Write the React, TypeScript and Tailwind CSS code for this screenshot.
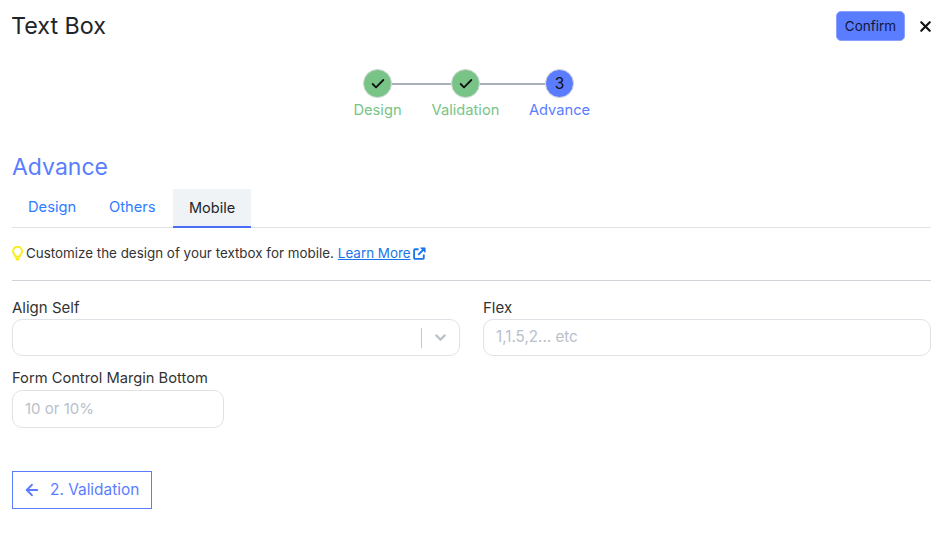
import { ArrowLeft, Check, ChevronDown, X } from 'lucide-react';

const font = "font-['Inter','Noto_Sans',sans-serif]";

function Step({ label, state, n }: { label: string; state: 'done' | 'current'; n?: number }) {
  const done = state === 'done';
  return (
    <div className="flex flex-col items-center w-[29px] relative z-10">
      <div className={`w-[29px] h-[29px] shrink-0 rounded-full border border-[#d5d8dc] flex items-center justify-center ${done ? 'bg-[#78c486]' : 'bg-[#5a7dff]'}`}>
        {done ? <Check className="w-[16px] h-[16px] text-[#111]" strokeWidth={2.7} /> : <span className="text-[15.5px] leading-none text-[#111]">{n}</span>}
      </div>
      <span className={`mt-[2px] whitespace-nowrap text-[14.7px] leading-[20px] ${done ? 'text-[#78c486]' : 'text-[#5a7dff]'}`}>{label}</span>
    </div>
  );
}

function Bulb() {
  return (
    <svg viewBox="0 0 11 15" className="w-[11px] h-[15px] mr-[3px] shrink-0">
      <path d="M3.4 10.6C3.2 8.8 1 7.8 1 5.3a4.5 4.5 0 0 1 9 0c0 2.5-2.2 3.5-2.4 5.3z" fill="none" stroke="#f9ee1a" strokeWidth="2" />
      <path d="M3.5 11.6h4v1.4c0 1-.8 1.7-2 1.7s-2-.7-2-1.7z" fill="#f9ee1a" />
    </svg>
  );
}

function ExternalLink() {
  return (
    <svg viewBox="0 0 14 14" className="ml-[2px] w-[13px] h-[13px] shrink-0" fill="none" stroke="#1c74e9" strokeWidth="2">
      <path d="M6 2.4H2.2a1 1 0 0 0-1 1v8.4a1 1 0 0 0 1 1h8.4a1 1 0 0 0 1-1V8" />
      <path d="M5.6 8.4 12.4 1.6" />
      <path d="M8 1h5v5" fill="#1c74e9" strokeWidth="1" />
    </svg>
  );
}

export default function App() {
  return (
    <div className={`w-[942px] h-[555px] bg-white overflow-hidden px-[11px] ${font}`}>
      <div className="flex items-center justify-between h-[52px]">
        <h1 className="text-[23.3px] leading-[30px] text-[#212529]">Text Box</h1>
        <div className="flex items-center mr-[-3px]">
          <button className="w-[69px] h-[30px] rounded-[5px] bg-[#5a7dff] border border-[#8aa2ff] text-[13.5px] text-[#10163a]">Confirm</button>
          <X className="ml-[12px] w-[17px] h-[17px] text-[#111]" strokeWidth={3} />
        </div>
      </div>

      <div className="flex justify-center mt-[17px] h-[50px] pr-[5px]">
        <div className="relative flex items-start">
          <Step label="Design" state="done" />
          <div className="w-[59px] h-[2px] mt-[14px] bg-[#a9afb9]" />
          <Step label="Validation" state="done" />
          <div className="w-[65px] h-[2px] mt-[14px] bg-[#a9afb9]" />
          <Step label="Advance" state="current" n={3} />
        </div>
      </div>

      <div className="pl-px mt-[33px]">
        <h2 className="text-[23px] leading-[30px] text-[#5a7dff]">Advance</h2>

        <div className="flex mt-[7px] h-[39px] border-b border-[#dfe2e7] w-[919px]">
          <div className="w-[80px] pl-[16px] pt-[8px] text-[14.7px] leading-[20px] text-[#2f7bff]">Design</div>
          <div className="w-[81px] pl-[17px] pt-[8px] text-[14.7px] leading-[20px] text-[#2f7bff]">Others</div>
          <div className="w-[78px] h-[39px] pl-[16px] pt-[9px] bg-[#f0f3f6] border-b-2 border-[#4a6cf7] text-[14.5px] leading-[20px] text-[#212529]">Mobile</div>
        </div>

        <div className="flex items-center h-[53px] border-b border-[#cfd2d6] w-[919px] pb-[1px]">
          <Bulb />
          <span className="text-[13.4px] text-[#333] whitespace-nowrap">Customize the design of your textbox for mobile.</span>
          <a className="ml-[4px] text-[13.4px] text-[#1c74e9] underline whitespace-nowrap">Learn More</a>
          <ExternalLink />
        </div>

        <div className="grid grid-cols-[448px_448px] gap-x-[23px] w-[919px] mt-[17px]">
          <div>
            <label className="block text-[15px] leading-[20px] text-[#333]">Align Self</label>
            <div className="mt-[1px] h-[37px] rounded-[10px] border border-[#dfe3e8] flex items-center justify-end">
              <div className="w-px h-[20px] bg-[#c4c8cd]" />
              <ChevronDown className="mx-[10px] w-[17px] h-[17px] text-[#bcc1c7]" strokeWidth={3} />
            </div>
          </div>
          <div>
            <label className="block text-[15px] leading-[20px] text-[#333]">Flex</label>
            <div className="mt-[1px] h-[37px] rounded-[10px] border border-[#dfe3e8] flex items-center pl-[12px] text-[15.2px] text-[#b8c0cc]">1,1.5,2... etc</div>
          </div>
          <div className="mt-[12px] col-span-2">
            <label className="block text-[14.7px] leading-[20px] text-[#333]">Form Control Margin Bottom</label>
            <div className="mt-[2px] w-[212px] h-[38px] rounded-[10px] border border-[#dfe3e8] flex items-center pl-[12px] text-[15px] text-[#b8c0cc]">10 or 10%</div>
          </div>
        </div>

        <button className="mt-[43px] w-[140px] h-[38px] border border-[#5a7dff] flex items-center pl-[10px] text-[#5a7dff]">
          <ArrowLeft className="w-[18px] h-[18px]" strokeWidth={2.4} />
          <span className="ml-[9px] text-[15.4px]">2. Validation</span>
        </button>
      </div>
    </div>
  );
}
